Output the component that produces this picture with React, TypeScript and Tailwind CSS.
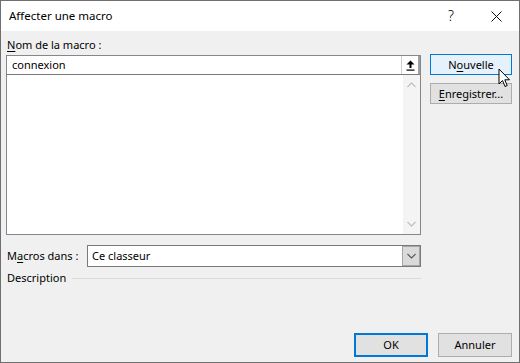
import React from "react";

function Cursor() {
  return (
    <svg className="absolute left-[497px] top-[67px]" width="14" height="21" viewBox="0 0 14 21">
      <path d="M1 1 L1 16 L4.5 12.5 L7 18.5 L9.2 17.6 L6.8 11.8 L11.5 11.8 Z" fill="#fff" stroke="#000" strokeWidth="1" strokeLinejoin="miter" />
    </svg>
  );
}

export default function App() {
  return (
    <div className="w-[520px] h-[363px] border border-[#6f6f6f] flex flex-col bg-[#f0f0f0] relative text-[11px] text-black font-['Segoe_UI','Noto_Sans',sans-serif]">
      {/* Title bar */}
      <div className="h-[30px] bg-white flex items-center shrink-0">
        <div className="pl-[8px] leading-[16px] text-[11.5px]">Affecter une macro</div>
        <div className="ml-auto flex items-center h-full">
          <div className="w-[44px] text-center text-[14px] leading-[16px] font-light">?</div>
          <div className="w-[46px] flex justify-center">
            <svg width="11" height="11" viewBox="0 0 11 11">
              <path d="M0.5 0.5 L10.5 10.5 M10.5 0.5 L0.5 10.5" stroke="#111" strokeWidth="1" />
            </svg>
          </div>
        </div>
      </div>

      {/* Body */}
      <div className="flex-1 flex flex-col">
        <div className="flex">
          {/* Left column */}
          <div className="ml-[5px] w-[415px] pt-[6px] flex flex-col">
            <div className="h-[16px] leading-[16px] pl-px">
              <span className="underline underline-offset-2">N</span>om de la macro :
            </div>
            <div className="mt-[2px] h-[180px] border border-[#828790] bg-white flex flex-col">
              <div className="h-[19px] border-b border-[#7a7a7a] flex items-center shrink-0">
                <div className="pl-[5px] leading-[16px] flex-1">connexion</div>
                <div className="w-[19px] h-[18px] border-l border-[#d0d0d0] border-r-2 border-r-[#a0a0a0] flex items-center justify-center bg-white">
                  <svg width="9" height="11" viewBox="0 0 9 11">
                    <path d="M4.5 0.5 L8.5 4.5 L5.5 4.5 L5.5 8 L3.5 8 L3.5 4.5 L0.5 4.5 Z" fill="#000" />
                    <rect x="0.5" y="9.5" width="8" height="1.2" fill="#000" />
                  </svg>
                </div>
              </div>
              <div className="flex-1 flex">
                <div className="flex-1" />
                <div className="w-[17px] bg-[#f4f4f4] flex flex-col items-center justify-between py-[7px]">
                  <svg width="9" height="6" viewBox="0 0 9 6">
                    <path d="M0.5 5 L4.5 1 L8.5 5" fill="none" stroke="#c2c2c2" strokeWidth="1.3" />
                  </svg>
                  <svg width="9" height="6" viewBox="0 0 9 6">
                    <path d="M0.5 1 L4.5 5 L8.5 1" fill="none" stroke="#c2c2c2" strokeWidth="1.3" />
                  </svg>
                </div>
              </div>
            </div>

            <div className="mt-[10px] flex items-center h-[22px]">
              <div className="w-[81px] pl-px leading-[16px]">
                M<span className="underline underline-offset-2">a</span>cros dans :
              </div>
              <div className="flex-1 h-[22px] border border-[#7a7a7a] bg-white flex items-center">
                <div className="flex-1 pl-[4px] leading-[16px]">Ce classeur</div>
                <div className="w-[18px] h-[20px] bg-[#dadada] border border-[#a6a6a6] flex items-center justify-center">
                  <svg width="9" height="6" viewBox="0 0 9 6">
                    <path d="M0.5 1 L4.5 5 L8.5 1" fill="none" stroke="#555" strokeWidth="1.1" />
                  </svg>
                </div>
              </div>
            </div>

            <div className="mt-[3px] h-[16px] flex items-center">
              <div className="pl-px leading-[16px]">Description</div>
              <div className="flex-1 ml-[6px] h-px bg-[#dcdcdc]" />
            </div>
          </div>

          {/* Right column */}
          <div className="ml-[9px] w-[82px] pt-[23px] flex flex-col gap-[8px]">
            <div className="h-[21px] border border-[#0078d7] bg-[#e5f1fb] flex items-center justify-center leading-[16px]">
              N<span className="underline underline-offset-2">o</span>uvelle
            </div>
            <div className="h-[21px] border border-[#adadad] bg-[#e1e1e1] flex items-center justify-center leading-[16px]">
              <span className="underline underline-offset-2">E</span>nregistrer...
            </div>
          </div>
        </div>

        <div className="mt-auto flex justify-end gap-[10px] pr-[7px] pb-[5px]">
          <div className="w-[74px] h-[24px] border-2 border-[#0078d7] bg-[#e1e1e1] flex items-center justify-center leading-[16px]">
            OK
          </div>
          <div className="w-[74px] h-[24px] border border-[#adadad] bg-[#e1e1e1] flex items-center justify-center leading-[16px]">
            Annuler
          </div>
        </div>
      </div>

      <Cursor />
    </div>
  );
}
